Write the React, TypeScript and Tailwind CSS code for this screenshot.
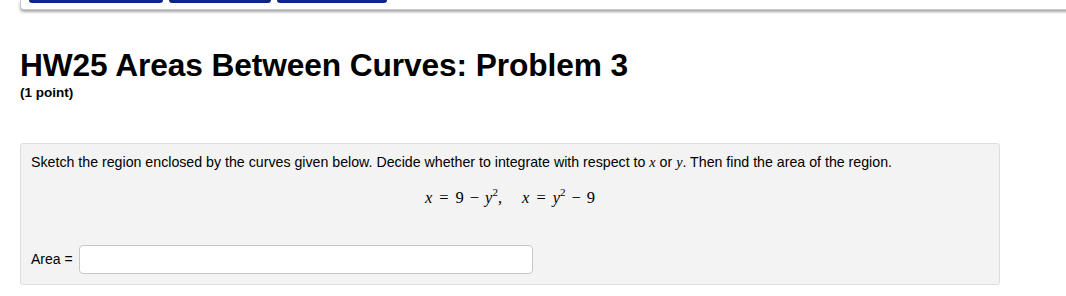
import React from "react";

function MathExpr() {
  return (
    <div
      className="flex justify-center items-baseline text-[16.5px] text-black"
      style={{ fontFamily: '"Liberation Serif", "DejaVu Serif", serif' }}
    >
      <span className="italic">x</span>
      <span className="mx-[7px]">=</span>
      <span>9</span>
      <span className="mx-[6px]">−</span>
      <span className="italic">y</span>
      <sup className="text-[11px] relative -top-[7px]">2</sup>
      <span>,</span>
      <span className="w-[20px]" />
      <span className="italic">x</span>
      <span className="mx-[7px]">=</span>
      <span className="italic">y</span>
      <sup className="text-[11px] relative -top-[7px]">2</sup>
      <span className="mx-[6px]">−</span>
      <span>9</span>
    </div>
  );
}

export default function App() {
  return (
    <div
      className="w-[1066px] h-[296px] bg-white overflow-hidden"
      style={{ fontFamily: '"Liberation Sans", Arial, sans-serif' }}
    >
      <div className="ml-[20px] h-[10px] bg-white rounded-bl-[4px] border-l border-b border-[#c8c8c8] shadow-[0_2px_3px_rgba(0,0,0,0.35)] flex gap-[6px] pl-[8px] -mr-[10px]">
        <div className="h-[3px] w-[134px] bg-[#0d2584] rounded-b-[3px]" />
        <div className="h-[3px] w-[102px] bg-[#0d2584] rounded-b-[3px]" />
        <div className="h-[3px] w-[110px] bg-[#0d2584] rounded-b-[3px]" />
      </div>

      <div className="px-[20px]">
        <h1 className="mt-[38px] text-[31.7px] leading-[34px] font-bold text-black tracking-[-0.1px]">
          HW25 Areas Between Curves: Problem 3
        </h1>
        <div className="text-[13.5px] leading-[16px] font-bold text-black mt-[3px]">(1 point)</div>

        <div className="mt-[42px] w-[980px] bg-[#f3f3f3] border border-[#dedede] rounded-[3px] px-[10px] pt-[9px] pb-[10px]">
          <p className="text-[14.2px] leading-[18px] text-black">
            Sketch the region enclosed by the curves given below. Decide whether to integrate with respect to{" "}
            <span className="italic" style={{ fontFamily: '"Liberation Serif", serif' }}>x</span> or{" "}
            <span className="italic" style={{ fontFamily: '"Liberation Serif", serif' }}>y</span>. Then find the area of the region.
          </p>
          <div className="mt-[15px]">
            <MathExpr />
          </div>
          <div className="mt-[34px] flex items-center gap-[6px]">
            <span className="text-[14px] text-black">Area =</span>
            <input
              type="text"
              className="w-[454px] h-[29px] bg-white border border-[#c8c8c8] rounded-[4px] outline-none px-2"
            />
          </div>
        </div>
      </div>
    </div>
  );
}
